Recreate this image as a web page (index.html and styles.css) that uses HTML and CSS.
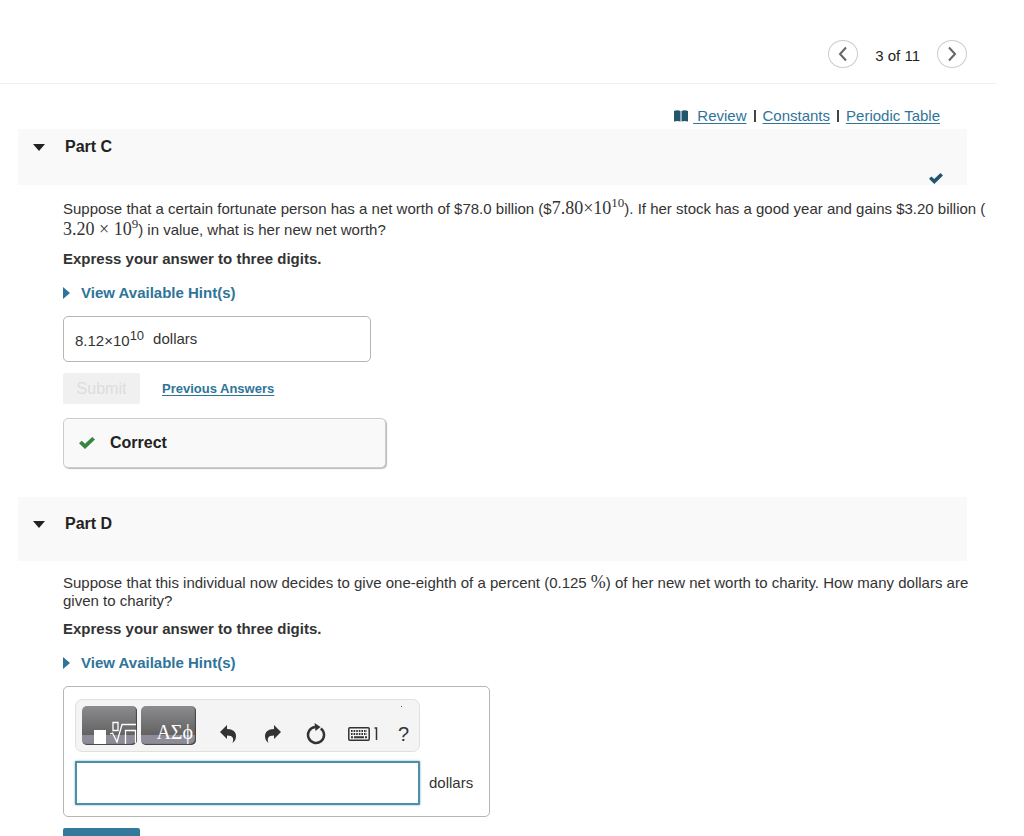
FILE: index.html
```
<!DOCTYPE html>
<html lang="en">
<head>
    <meta charset="UTF-8">
    <meta name="viewport" content="width=device-width, initial-scale=1.0">
    <title>Homework</title>
    <link rel="stylesheet" href="styles.css">
</head>
<body>
    <header class="pager">
        <button class="pager-button" aria-label="Previous item">
            <svg width="10" height="16" viewBox="0 0 10 16"><path d="M8 1.5 L2 8 L8 14.5" /></svg>
        </button>
        <span class="pager-text">3 of 11</span>
        <button class="pager-button" aria-label="Next item">
            <svg width="10" height="16" viewBox="0 0 10 16"><path d="M2 1.5 L8 8 L2 14.5" /></svg>
        </button>
    </header>

    <main class="content">
        <nav class="resources">
            <svg class="book" width="14" height="12" viewBox="0 0 14 12">
                <path d="M0 1 Q3.5 -.5 6.5 1 V11.5 Q3.5 10.5 0 11.5 Z M7.5 1 Q10.5 -.5 14 1 V11.5 Q10.5 10.5 7.5 11.5 Z" />
            </svg>
            <a class="review" href="#">&nbsp;Review</a>
            <span class="divider"></span>
            <a href="#">Constants</a>
            <span class="divider"></span>
            <a href="#">Periodic Table</a>
        </nav>

        <section>
            <div class="part-header part-done">
                <button class="part-toggle"><span class="arrow-down"></span>Part C</button>
                <svg class="done-check" width="14" height="11" viewBox="0 0 14 11"><path d="M0 5.8 L2.4 3.4 L5.2 6 L11.5 0 L14 2.4 L5.3 11 Z" /></svg>
            </div>
            <div class="part-body">
                <p class="question">Suppose that a certain fortunate person has a net worth of $78.0 billion ($<span class="math">7.80×10<sup>10</sup></span>). If her stock has a good year and gains $3.20 billion (<br><span class="math">3.20 × 10<sup>9</sup></span>) in value, what is her new net worth?</p>
                <p class="instruction">Express your answer to three digits.</p>
                <button class="hints"><span class="arrow-right"></span>View Available Hint(s)</button>
                <div class="answer">
                    <span class="answer-value">8.12×10<sup>10</sup></span>
                    <span>dollars</span>
                </div>
                <div class="actions">
                    <button class="submit" disabled>Submit</button>
                    <a class="previous" href="#">Previous Answers</a>
                </div>
                <div class="feedback">
                    <svg width="16" height="12" viewBox="0 0 16 12"><path d="M0 6.3 L2.7 3.7 L6 6.7 L13.2 0 L16 2.6 L6 12 Z" /></svg>
                    Correct
                </div>
            </div>
        </section>

        <section>
            <div class="part-header">
                <button class="part-toggle"><span class="arrow-down"></span>Part D</button>
            </div>
            <div class="part-body">
                <p class="question">Suppose that this individual now decides to give one-eighth of a percent (0.125 <span class="percent">%</span>) of her new net worth to charity. How many dollars are<br>given to charity?</p>
                <p class="instruction">Express your answer to three digits.</p>
                <button class="hints"><span class="arrow-right"></span>View Available Hint(s)</button>
                <div class="editor">
                    <div class="toolbar">
                        <button class="palette" aria-label="Templates">
                            <svg width="55" height="39" viewBox="0 0 55 39">
                                <rect x="12" y="24" width="12" height="14" fill="#fff" />
                                <path d="M31 16.5 H36 V24.5 H31 Z M28 28 L30.5 27 L35 36 L40 18.5 H54 M43.5 38 V24.5 H53.5 V38" fill="none" stroke="#fff" stroke-width="1.3" />
                            </svg>
                        </button>
                        <button class="palette symbols">ΑΣϕ</button>
                        <button class="tool undo" aria-label="Undo">
                            <svg width="16" height="18" viewBox="0 0 16 18"><path d="M0 7 L7 0 V4 C13 4 16 7 16 11 C16 14 15 16 12.5 18 C14 14 13.5 10.5 7 10.5 V14 Z" /></svg>
                        </button>
                        <button class="tool redo" aria-label="Redo">
                            <svg width="16" height="18" viewBox="0 0 16 18"><path d="M16 7 L9 0 V4 C3 4 0 7 0 11 C0 14 1 16 3.5 18 C2 14 2.5 10.5 9 10.5 V14 Z" /></svg>
                        </button>
                        <button class="tool reset" aria-label="Reset">
                            <svg width="20" height="22" viewBox="0 0 20 22"><path d="M14.8 5.5 A8 8 0 1 1 9 4" fill="none" stroke="#333" stroke-width="2.5" /><path d="M8.5 0 L14.5 4 L9.5 8 Z" /></svg>
                        </button>
                        <button class="tool keyboard" aria-label="Keyboard shortcuts">
                            <svg width="30" height="14" viewBox="0 0 30 14">
                                <rect x=".8" y=".8" width="20.4" height="12.4" rx="1" fill="none" stroke="#333" stroke-width="1.5" />
                                <path d="M3 4 H19 M3 7 H19" fill="none" stroke="#333" stroke-width="2" stroke-dasharray="1.6 1" />
                                <path d="M3 10.3 H5 M6 10.3 H16 M17 10.3 H19" fill="none" stroke="#333" stroke-width="2" />
                                <path d="M26.5 1 H28.5 V13" fill="none" stroke="#333" stroke-width="1.5" />
                            </svg>
                        </button>
                        <button class="tool help" aria-label="Help"><span class="speck"></span>?</button>
                    </div>
                    <div class="entry">
                        <input class="entry-box" id="answer-d" type="text">
                        <label for="answer-d">dollars</label>
                    </div>
                </div>
                <button class="submit" aria-label="Submit"></button>
            </div>
        </section>
    </main>
</body>
</html>
```
FILE: styles.css
```
* {
    box-sizing: border-box;
}

body {
    margin: 0;
    background: #fff;
    color: #333;
    font-family: "Liberation Sans", Arial, sans-serif;
    font-size: 15px;
    line-height: 18px;
}

button,
input {
    font: inherit;
    color: inherit;
    padding: 0;
}

button {
    background: none;
    border: none;
    cursor: pointer;
}

p {
    margin: 0;
}

a {
    color: #2f7499;
    text-underline-offset: 2px;
}

.pager {
    display: flex;
    justify-content: flex-end;
    align-items: center;
    gap: 17px;
    height: 84px;
    margin-right: 28px;
    padding: 24px 29px 0 0;
    border-bottom: 1px solid #f0f0f0;
}

.pager-button {
    display: flex;
    align-items: center;
    justify-content: center;
    width: 30px;
    height: 28px;
    border: 1px solid #ccc;
    border-radius: 50%;
}

.pager-button path {
    fill: none;
    stroke: #666;
    stroke-width: 2;
}

.pager-text {
    padding-top: 4px;
    color: #222;
}

.content {
    padding: 23px 57px 24px 18px;
}

.resources {
    display: flex;
    justify-content: flex-end;
    align-items: center;
    gap: 7px;
    padding: 0 27px 4px 0;
}

.book,
.done-check {
    fill: #21566e;
}

.review {
    margin-left: -2px;
}

.divider {
    width: 2px;
    height: 12px;
    background: #444;
}

.part-header {
    position: relative;
    height: 64px;
    padding: 18px 15px;
    background: #f9f9f9;
}

.part-done {
    height: 56px;
    padding-top: 9px;
}

.part-toggle {
    display: flex;
    align-items: center;
    gap: 20px;
    font-size: 16px;
    font-weight: bold;
    color: #222;
}

.arrow-down {
    border: 6px solid transparent;
    border-top: 7px solid #222;
    border-bottom: 0;
}

.done-check {
    position: absolute;
    right: 24px;
    bottom: 1px;
}

.part-body {
    padding: 13px 0 29px 45px;
}

.question {
    white-space: nowrap;
}

.math {
    font-family: "Liberation Serif", serif;
    font-size: 18px;
    line-height: 21px;
}

sup {
    font-size: 13px;
    line-height: 0;
}

.percent {
    font-family: "Liberation Serif", serif;
    font-size: 18px;
    line-height: 16px;
}

.instruction {
    margin-top: 10px;
    font-weight: bold;
}

.hints {
    display: flex;
    align-items: center;
    gap: 11px;
    margin: 16px 0 14px;
    font-weight: bold;
    color: #2f7499;
}

.arrow-right {
    border: 6px solid transparent;
    border-left: 7px solid #2f7499;
    border-right: 0;
}

.answer {
    display: flex;
    align-items: center;
    gap: 9px;
    width: 308px;
    height: 46px;
    padding-left: 11px;
    border: 1px solid #b5b5b5;
    border-radius: 5px;
}

.answer-value {
    padding-top: 3px;
}

.actions {
    display: flex;
    align-items: center;
    gap: 22px;
    margin: 11px 0 14px;
}

.submit {
    width: 77px;
    height: 31px;
    border-radius: 2px;
    background: #34789b;
    color: #fff;
    font-size: 16px;
}

.submit:disabled {
    background: #f0f0f0;
    color: #ddd;
    cursor: default;
}

.previous {
    font-size: 13px;
    font-weight: bold;
}

.feedback {
    display: flex;
    align-items: center;
    gap: 15px;
    width: 323px;
    height: 50px;
    padding-left: 15px;
    border: 1px solid #ccc;
    border-radius: 5px;
    background: #f9f9f9;
    box-shadow: 1px 1px 1px #bbb;
    font-size: 16px;
    font-weight: bold;
    color: #222;
}

.feedback svg {
    fill: #398442;
}

.editor {
    width: 427px;
    height: 131px;
    margin-bottom: 11px;
    padding: 12px 11px;
    border: 1px solid #b5b5b5;
    border-radius: 5px;
}

.toolbar {
    display: flex;
    align-items: flex-start;
    gap: 4px;
    width: 345px;
    height: 53px;
    padding: 6px;
    border: 1px solid #e0e0e0;
    border-radius: 7px;
    background: #f4f4f4;
}

.palette {
    width: 55px;
    height: 39px;
    border-radius: 5px;
    overflow: hidden;
    background: linear-gradient(#8c8c90, #626262 74%, #8d8c98 75%);
    box-shadow: inset -1px -1px 1px #444;
    color: #fff;
}

.palette svg {
    display: block;
}

.symbols {
    padding: 12px 3px 0 0;
    font-family: "Liberation Serif", serif;
    font-size: 20px;
    text-align: right;
}

.tool {
    position: relative;
    display: flex;
    align-items: center;
    justify-content: center;
    height: 20px;
    margin-top: 18px;
    fill: #333;
}

.undo {
    margin-left: 20px;
}

.redo {
    margin-left: 25px;
}

.reset {
    margin-left: 21px;
}

.keyboard {
    margin-left: 18px;
}

.help {
    margin-left: 16px;
    font-size: 20px;
}

.speck {
    position: absolute;
    top: -18px;
    left: 3px;
    width: 1px;
    height: 1px;
    background: #555;
}

.entry {
    display: flex;
    align-items: center;
    gap: 9px;
    margin-top: 9px;
}

.entry-box {
    width: 345px;
    height: 44px;
    padding: 0 8px;
    border: 2px solid #4f8da8;
    border-radius: 1px;
    outline: none;
    box-shadow: 0 0 2px #4f9cbd;
}
```
